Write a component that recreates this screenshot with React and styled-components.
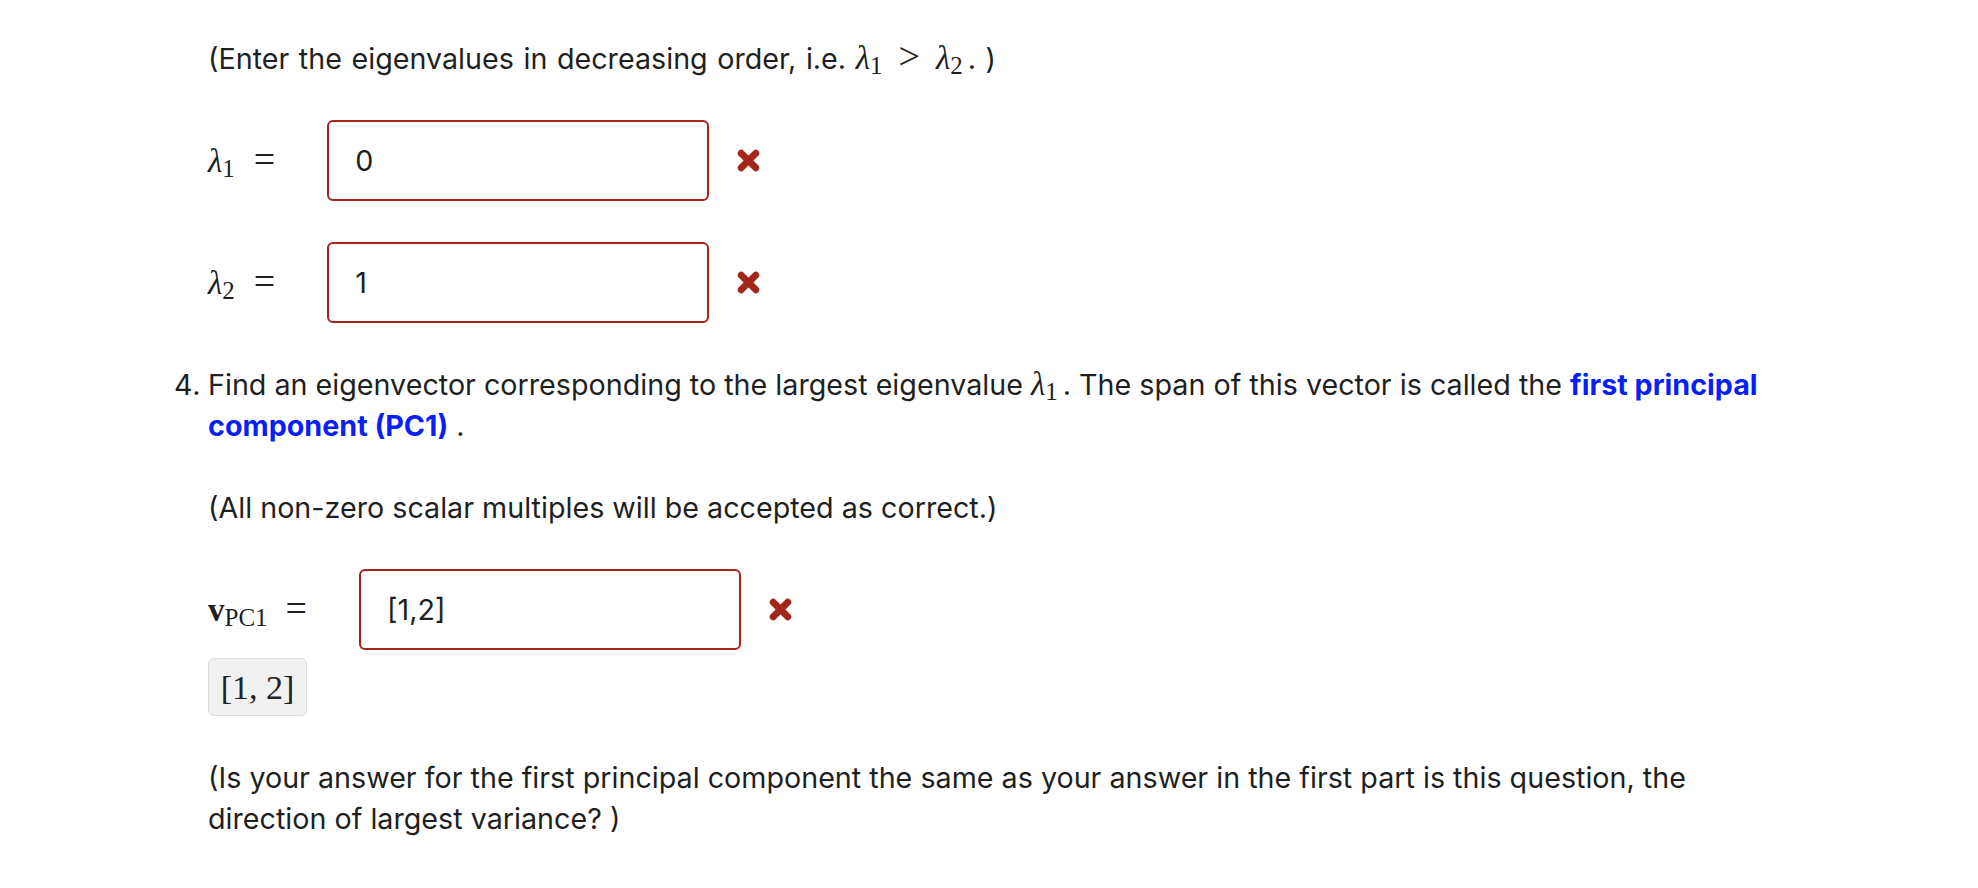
import React from "react";
import styled, { createGlobalStyle } from "styled-components";

const GlobalStyle = createGlobalStyle`
    html, body {
        margin: 0;
        padding: 0;
        background: #ffffff;
    }
    body {
        font-family: Inter, "Liberation Sans", sans-serif;
        color: #1f1f1f;
    }
`;

const Page = styled.div`
    width: 1978px;
    padding: 36px 0 40px 208px;
    box-sizing: border-box;
`;

const Content = styled.div`
    width: 1585px;
    font-size: 28.7px;
    line-height: 41px;
    display: flex;
    flex-direction: column;
    gap: 41px;
`;

const Para = styled.p`
    margin: 0;
    word-spacing: ${(p) => (p.$wide ? 1.5 : 0)}px;
`;

const Math = styled.span`
    font-family: "Liberation Serif", "DejaVu Serif", serif;
    font-size: 33px;
    word-spacing: 0;
    white-space: nowrap;
    margin-right: ${(p) => (p.$trail ? 5 : 0)}px;
`;

const Var = styled.i`
    font-style: italic;
`;

const Bold = styled.b`
    font-weight: bold;
`;

const Sub = styled.sub`
    font-size: 25px;
    vertical-align: -5px;
    line-height: 0;
`;

const Op = styled.span`
    font-size: 38px;
    margin-left: ${(p) => p.$space || 14}px;
    margin-right: ${(p) => (p.$rel ? p.$space : 0)}px;
`;

const Row = styled.div`
    display: flex;
    align-items: center;
`;

const Label = styled.div`
    margin-right: 52px;
    white-space: nowrap;
`;

const AnswerBox = styled.div`
    width: 382px;
    height: 81px;
    box-sizing: border-box;
    border: 2px solid #a5241b;
    border-radius: 6px;
    padding: 0 26px;
    display: flex;
    align-items: center;
    font-size: 28.7px;
    color: #1f1f1f;
    box-shadow: inset 0 1px 3px rgba(0, 0, 0, 0.06);
`;

const WrongMark = styled.svg`
    width: 25px;
    height: 25px;
    margin-left: 27px;
`;

const List = styled.ol`
    margin: 0;
    padding: 0;
    list-style-position: outside;
`;

const Item = styled.li`
    padding-left: 0;
`;

const Term = styled.span`
    color: #0a1ff5;
    font-weight: 700;
`;

const Block = styled.div`
    display: flex;
    flex-direction: column;
    gap: 8px;
`;

const Preview = styled.div`
    align-self: flex-start;
    width: 99px;
    height: 58px;
    box-sizing: border-box;
    background: #f1f1f1;
    border: 1px solid #dcdcdc;
    border-radius: 6px;
    display: flex;
    align-items: center;
    justify-content: center;
    font-family: "Liberation Serif", "DejaVu Serif", serif;
    font-size: 34px;
    color: #222;
`;

const Cross = () => (
    <WrongMark viewBox="0 0 24 24">
        <path
            d="M5 5 L19 19 M19 5 L5 19"
            stroke="#a3261a"
            strokeWidth="6.6"
            strokeLinecap="round"
            fill="none"
        />
    </WrongMark>
);

const Lambda = ({ n }) => (
    <>
        <Var>λ</Var>
        <Sub>{n}</Sub>
    </>
);

const EigenRow = ({ n, value }) => (
    <Row>
        <Label>
            <Math>
                <Lambda n={n} />
                <Op $space={19}>=</Op>
            </Math>
        </Label>
        <AnswerBox>{value}</AnswerBox>
        <Cross />
    </Row>
);

const App = () => {
    return (
        <>
            <GlobalStyle />
            <Page>
                <Content>
                    <Para $wide>
                        (Enter the eigenvalues in decreasing order, i.e.{" "}
                        <Math $trail>
                            <Lambda n="1" />
                            <Op $space={16} $rel>&gt;</Op>
                            <Lambda n="2" />
                        </Math>
                        . )
                    </Para>
                    <EigenRow n="1" value="0" />
                    <EigenRow n="2" value="1" />
                    <List start={4}>
                        <Item>
                            Find an eigenvector corresponding to the largest eigenvalue{" "}
                            <Math $trail>
                                <Lambda n="1" />
                            </Math>
                            . The span of this vector is called the{" "}
                            <Term>first principal component (PC1)</Term> .
                        </Item>
                    </List>
                    <Para>(All non-zero scalar multiples will be accepted as correct.)</Para>
                    <Block>
                        <Row>
                            <Label>
                                <Math>
                                    <Bold>v</Bold>
                                    <Sub>PC1</Sub>
                                    <Op $space={18}>=</Op>
                                </Math>
                            </Label>
                            <AnswerBox>[1,2]</AnswerBox>
                            <Cross />
                        </Row>
                        <Preview>[1, 2]</Preview>
                    </Block>
                    <Para>
                        (Is your answer for the first principal component the same as your answer in the
                        first part is this question, the direction of largest variance? )
                    </Para>
                </Content>
            </Page>
        </>
    );
};

export default App;
